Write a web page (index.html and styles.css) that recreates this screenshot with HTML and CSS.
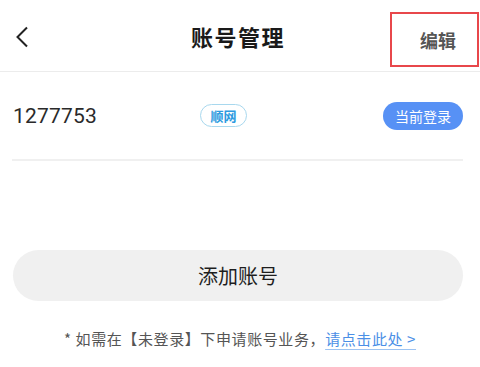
FILE: index.html
```html
<!DOCTYPE html>
<html lang="zh">
<head>
<meta charset="utf-8">
<link rel="stylesheet" href="styles.css">
</head>
<body>
<div class="page">
  <header class="header">
    <div class="back">
      <svg width="14" height="22" viewBox="0 0 14 22"><path d="M12 1.5 L2.5 11 L12 20.5" fill="none" stroke="#222" stroke-width="2" stroke-linejoin="miter"/></svg>
    </div>
    <h1 class="title">账号管理</h1>
    <div class="edit">编辑</div>
  </header>
  <div class="list">
    <div class="row">
      <span class="account">1277753</span>
      <span class="tag">顺网</span>
      <span class="current">当前登录</span>
    </div>
  </div>
  <div class="actions">
    <button class="add">添加账号</button>
  </div>
  <p class="note">* 如需在【未登录】下申请账号业务，<a class="link">请点击此处 &gt;</a></p>
</div>
</body>
</html>
```
FILE: styles.css
```css
* { box-sizing: border-box; }
html, body { margin: 0; padding: 0; background: #fff; }
body {
  width: 480px;
  height: 367px;
  overflow: hidden;
  font-family: "Noto Sans CJK SC", "Noto Sans", sans-serif;
}
.header {
  position: relative;
  height: 72px;
  border-bottom: 1px solid #ececec;
  display: flex;
  align-items: center;
  justify-content: center;
}
.back {
  position: absolute;
  left: 15px;
  top: 26px;
  width: 14px;
  height: 22px;
  display: flex;
}
.title {
  margin: 0 0 0 -4px;
  font-size: 22px;
  font-weight: 700;
  color: #1a1a1a;
  line-height: 1;
  letter-spacing: 1.5px;
}
.edit {
  position: absolute;
  left: 390px;
  top: 12px;
  width: 89px;
  height: 55px;
  border: 2px solid #e8474b;
  display: flex;
  align-items: center;
  justify-content: center;
  padding-left: 7px;
  font-size: 18px;
  font-weight: 700;
  color: #555;
}
.list { padding: 0 17px 0 12px; }
.row {
  position: relative;
  height: 89px;
  border-bottom: 2px solid #f0f0f0;
  display: flex;
  align-items: center;
}
.account {
  padding-left: 1px;
  font-family: "Roboto", "Noto Sans", sans-serif;
  font-size: 21px;
  letter-spacing: 0.2px;
  color: #2a2a2a;
  width: 188px;
}
.tag {
  height: 23px;
  width: 47px;
  border: 1.5px solid #a8d8ee;
  border-radius: 12px;
  color: #2d9be0;
  font-size: 13px;
  font-weight: 700;
  display: flex;
  align-items: center;
  justify-content: center;
}
.current {
  margin-left: auto;
  margin-right: 0;
  height: 28px;
  width: 80px;
  background: #5791f5;
  border-radius: 14px;
  color: #fff;
  font-size: 14px;
  display: flex;
  align-items: center;
  justify-content: center;
}
.actions { padding: 89px 17px 0 13px; }
.add {
  display: block;
  width: 100%;
  height: 51px;
  border: none;
  border-radius: 26px;
  background: #f0f0f0;
  font-family: "Noto Sans CJK SC", sans-serif;
  font-size: 20px;
  color: #1e1e1e;
}
.note {
  margin: 27px 0 0;
  text-align: center;
  font-size: 15px;
  letter-spacing: 0.6px;
  color: #555;
  padding-left: 0;
}
.link {
  color: #4b8fe6;
  text-decoration: underline;
  text-decoration-color: #9cc3f2;
  text-underline-offset: 4px;
}
```
